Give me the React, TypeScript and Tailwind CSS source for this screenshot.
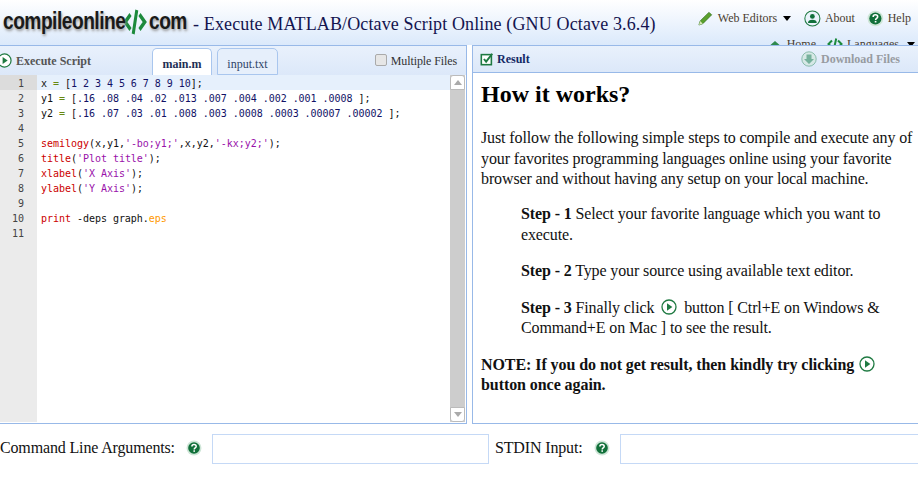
import React from "react";

const kw = "text-[#c00]";
const str = "text-[#91a]";
const num = "text-[#116]";
const op = "text-[#681]";

function PlayIcon({ className }: { className?: string }) {
  return (
    <svg viewBox="0 0 16 16" className={className}>
      <circle cx="8" cy="8" r="7" fill="#fff" stroke="#1f7a42" strokeWidth="1.3" />
      <path d="M6 4.2 11.4 8 6 11.8Z" fill="#1f7a42" />
    </svg>
  );
}

function HelpIcon({ className }: { className?: string }) {
  return (
    <svg viewBox="0 0 16 16" className={className}>
      <circle cx="8" cy="8" r="7.5" fill="#cfe6d8" />
      <circle cx="8" cy="8" r="5.8" fill="#11703a" />
      <path d="M5.9 6.5C5.9 5.2 6.9 4.5 8 4.5s2.2.7 2.2 1.9C10.2 7.9 8.2 8 8.2 9.4" fill="none" stroke="#fff" strokeWidth="1.5" />
      <rect x="7.4" y="10.3" width="1.6" height="1.5" fill="#fff" />
    </svg>
  );
}

function UserIcon({ className }: { className?: string }) {
  return (
    <svg viewBox="0 0 16 16" className={className}>
      <circle cx="8" cy="8" r="7.2" fill="#eaf3fb" stroke="#1f7a42" strokeWidth="1" />
      <circle cx="8" cy="6" r="2.3" fill="#11703a" />
      <path d="M3.8 12.2c0-2 1.6-3 4.2-3s4.2 1 4.2 3Z" fill="#11703a" />
    </svg>
  );
}

function PencilIcon({ className }: { className?: string }) {
  return (
    <svg viewBox="0 0 16 16" className={className}>
      <path d="M1 15 2.4 10.6 11.8 1.4 14.8 4 5.2 13.6Z" fill="#5aa02c" stroke="#2d6e17" strokeWidth="0.8" />
      <path d="M1 15 2.4 10.6 5.2 13.6Z" fill="#d8e8b8" />
    </svg>
  );
}

function CodeMark({ className }: { className?: string }) {
  return (
    <svg viewBox="0 0 16 12" className={className} preserveAspectRatio="none">
      <path d="M5 2.5 1.5 6 5 9.5M11 2.5 14.5 6 11 9.5M9.2 .5 6.8 11.5" fill="none" stroke="#1c8a3c" strokeWidth="2" />
    </svg>
  );
}

function Caret() {
  return <span className="inline-block w-0 h-0 border-x-[4.5px] border-x-transparent border-t-[5px] border-t-black" />;
}

function CodeLine({ n, active, children }: { n: number; active?: boolean; children?: React.ReactNode }) {
  return (
    <div className={`flex h-[15px] ${active ? "bg-[#e6f0fc]" : ""}`}>
      <div className={`w-[37px] shrink-0 pr-[13px] text-right text-[#444] ${active ? "bg-[#dcdcdc]" : "bg-[#ebebeb]"}`}>{n}</div>
      <div className="pl-[4px] whitespace-pre text-[#111]">{children}</div>
    </div>
  );
}

function LogoWord({ children, width }: { children: string; width: string }) {
  return (
    <span className={`${width} shrink-0 whitespace-nowrap origin-left scale-x-[0.78] font-['Liberation_Sans'] font-bold text-[24.5px] tracking-[-0.6px] text-[#1a1a1a] [text-shadow:1px_2px_3px_#999]`}>
      {children}
    </span>
  );
}

function Header() {
  return (
    <div className="h-[45px] flex justify-between overflow-hidden bg-gradient-to-b from-white to-[#dbe9fb]">
      <div className="flex items-center pl-[3px] pb-[2px] whitespace-nowrap">
        <LogoWord width="w-[120px]">compileonline</LogoWord>
        <CodeMark className="w-[24px] h-[26px] mr-[2px]" />
        <LogoWord width="w-[40px]">com</LogoWord>
        <span className="ml-[4px] mt-[5px] text-[18px] text-[#14144f] tracking-[0.13px]">- Execute MATLAB/Octave Script Online (GNU Octave 3.6.4)</span>
      </div>
      <div className="w-[220px] shrink-0 text-[12px] text-[#4a3d30] whitespace-nowrap">
        <div className="flex items-center justify-end h-[18px] mt-[9px] pr-[7px]">
          <PencilIcon className="w-[15px] h-[15px] mr-[5px]" />
          <span>Web Editors</span>
          <span className="ml-[6px] mr-[13px] flex"><Caret /></span>
          <UserIcon className="w-[17px] h-[17px] mr-[4px]" />
          <span>About</span>
          <HelpIcon className="w-[17px] h-[17px] ml-[12px] mr-[4px]" />
          <span>Help</span>
        </div>
        <div className="flex items-center justify-end h-[18px] mt-[8px] pr-[3px]">
          <span className="mr-[4px] w-0 h-0 border-x-[8px] border-x-transparent border-b-[7px] border-b-[#2f8a4e]" />
          <span>Home</span>
          <CodeMark className="w-[16px] h-[12px] ml-[11px] mr-[4px]" />
          <span>Languages</span>
          <span className="ml-[8px] flex"><Caret /></span>
        </div>
      </div>
    </div>
  );
}

function EditorPanel() {
  return (
    <div className="w-[467px] shrink-0 flex flex-col border-y border-r border-[#98b9e8]">
      <div className="h-[29px] flex items-end bg-gradient-to-b from-[#e9f1fc] to-[#dce8f9] relative">
        <div className="h-full flex items-center w-[152px] shrink-0">
          <PlayIcon className="w-[15px] h-[15px] ml-[-3px] mr-[4px]" />
          <span className="font-bold text-[12px] text-[#555]">Execute Script</span>
        </div>
        <div className="h-[27px] w-[60px] border border-b-0 border-[#a9c6ee] rounded-t-[5px] bg-white text-center font-bold text-[12px] leading-[30px] text-[#1e2f55]">main.m</div>
        <div className="h-[27px] w-[61px] ml-[5px] border border-[#a9c6ee] rounded-t-[5px] bg-[#e6effb] text-center text-[12px] leading-[30px] text-[#2e4468]">input.txt</div>
        <div className="ml-auto h-full flex items-center pr-[9px] text-[12px] tracking-[-0.1px] text-[#333]">
          <span className="w-[12px] h-[12px] mr-[4px] mb-[2px] rounded-[2px] border border-[#aaa] bg-[#e6e6e6]" />
          Multiple Files
        </div>
      </div>
      <div className="flex-1 flex bg-white min-h-0">
        <div className="flex-1 flex flex-col font-['DejaVu_Sans_Mono'] text-[10px] leading-[17px] tracking-[-0.03px]">
          <CodeLine n={1} active>x <span className={op}>=</span> [<span className={num}>1 2 3 4 5 6 7 8 9 10</span>];</CodeLine>
          <CodeLine n={2}>y1 <span className={op}>=</span> [<span className={num}>.16 .08 .04 .02 .013 .007 .004 .002 .001 .0008</span> ];</CodeLine>
          <CodeLine n={3}>y2 <span className={op}>=</span> [<span className={num}>.16 .07 .03 .01 .008 .003 .0008 .0003 .00007 .00002</span> ];</CodeLine>
          <CodeLine n={4} />
          <CodeLine n={5}><span className={kw}>semilogy</span>(x,y1,<span className={str}>'-bo;y1;'</span>,x,y2,<span className={str}>'-kx;y2;'</span>);</CodeLine>
          <CodeLine n={6}><span className={kw}>title</span>(<span className={str}>'Plot title'</span>);</CodeLine>
          <CodeLine n={7}><span className={kw}>xlabel</span>(<span className={str}>'X Axis'</span>);</CodeLine>
          <CodeLine n={8}><span className={kw}>ylabel</span>(<span className={str}>'Y Axis'</span>);</CodeLine>
          <CodeLine n={9} />
          <CodeLine n={10}><span className={kw}>print</span> -deps graph.<span className="text-[#f90]">eps</span></CodeLine>
          <CodeLine n={11} />
          <div className="flex-1 w-[37px] bg-[#ebebeb] mb-[1px]" />
        </div>
        <div className="w-[15px] mr-[1px] shrink-0 flex flex-col bg-[#cdcdcd] mb-[1px]">
          <div className="h-[15px] flex items-center justify-center bg-white border border-[#bbb] rounded-t-[3px]">
            <span className="w-0 h-0 border-x-[4px] border-x-transparent border-b-[5px] border-b-[#aaa]" />
          </div>
          <div className="flex-1" />
          <div className="h-[15px] flex items-center justify-center bg-white border border-[#bbb] rounded-b-[3px]">
            <span className="w-0 h-0 border-x-[4px] border-x-transparent border-t-[5px] border-t-[#aaa]" />
          </div>
        </div>
      </div>
    </div>
  );
}

function ResultPanel() {
  return (
    <div className="flex-1 flex flex-col border-y border-l border-[#98b9e8] ml-[5px] min-w-0">
      <div className="h-[27px] shrink-0 flex items-center justify-between border-b border-[#98b9e8] bg-gradient-to-b from-[#e9f1fc] to-[#dce8f9] pl-[7px] pr-[18px]">
        <div className="flex items-center">
          <svg viewBox="0 0 16 16" className="w-[14px] h-[14px] mr-[3px]">
            <rect x="1.5" y="3" width="11.5" height="11.5" fill="#fff" stroke="#1f7a42" strokeWidth="1.8" />
            <path d="M4.5 8 7 11 14 2" fill="none" stroke="#1f7a42" strokeWidth="2.2" />
          </svg>
          <span className="font-bold text-[12px] text-[#142a66]">Result</span>
        </div>
        <div className="flex items-center opacity-60">
          <svg viewBox="0 0 16 16" className="w-[16px] h-[16px] mr-[4px]">
            <circle cx="8" cy="8" r="7.2" fill="#cfe6d8" stroke="#2f8a5e" strokeWidth="0.8" />
            <path d="M5.5 3.5h5V8h2.5L8 13 3 8h2.5Z" fill="#2f8a5e" />
          </svg>
          <span className="font-bold text-[12px] text-[#666]">Download Files</span>
        </div>
      </div>
      <div className="flex-1 bg-white pl-[8px] pr-[4px] text-[16px] leading-[20.5px] tracking-[-0.12px] text-[#111]">
        <h1 className="mt-[7px] mb-[20px] text-[24px] leading-[28px] tracking-normal font-bold text-black">How it works?</h1>
        <p className="mb-[14.5px]">Just follow the following simple steps to compile and execute any of your favorites programming languages online using your favorite browser and without having any setup on your local machine.</p>
        <div className="ml-[40px] mr-[26px]">
          <p className="mb-[16px]"><b>Step - 1</b> Select your favorite language which you want to execute.</p>
          <p className="mb-[16px]"><b>Step - 2</b> Type your source using available text editor.</p>
          <p className="mb-[16px]"><b>Step - 3</b> Finally click <PlayIcon className="inline-block w-[16px] h-[16px] mx-[3px] align-[-2px]" /> button [ Ctrl+E on Windows &amp; Command+E on Mac ] to see the result.</p>
        </div>
        <p className="font-bold tracking-[-0.07px]">NOTE: If you do not get result, then kindly try clicking <PlayIcon className="inline-block w-[16px] h-[16px] ml-[1px] align-[-2px]" /> button once again.</p>
      </div>
    </div>
  );
}

function ArgsBar() {
  return (
    <div className="flex items-center pt-[10px] text-[16px] tracking-[-0.15px] text-[#111] whitespace-nowrap">
      <span className="w-[176px] shrink-0 mb-[3px]">Command Line Arguments:</span>
      <HelpIcon className="w-[16px] h-[16px] ml-[10px] mr-[10px] mb-[3px] shrink-0" />
      <div className="w-[277px] h-[30px] shrink-0 border border-[#c5d9f6] bg-white" />
      <span className="ml-[6px] w-[87px] shrink-0 mb-[3px]">STDIN Input:</span>
      <HelpIcon className="w-[16px] h-[16px] ml-[12px] mr-[10px] mb-[3px] shrink-0" />
      <div className="flex-1 h-[30px] border border-[#c5d9f6] border-r-0 bg-white" />
    </div>
  );
}

export default function App() {
  return (
    <div className="w-[918px] h-[481px] overflow-hidden bg-white font-['Liberation_Serif',serif]">
      <Header />
      <div className="flex h-[379px]">
        <EditorPanel />
        <ResultPanel />
      </div>
      <ArgsBar />
    </div>
  );
}
